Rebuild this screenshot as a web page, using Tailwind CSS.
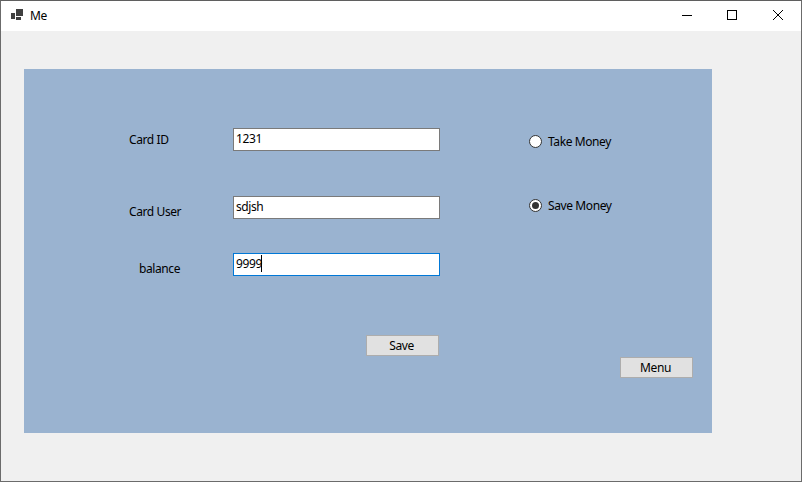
<!DOCTYPE html>
<html>
<head>
<meta charset="utf-8">
<script src="https://cdn.jsdelivr.net/npm/@tailwindcss/browser@4"></script>
</head>
<body class="m-0 overflow-hidden bg-[#f0f0f0]">
<div class="w-[802px] h-[482px] flex flex-col border border-[#6b6b6b] border-t-[#5f5f5f] text-[12px] leading-[16px] tracking-[-0.4px] text-[#000] font-['Noto_Sans','Open_Sans',sans-serif]">
  <header class="h-[30px] shrink-0 bg-white flex items-center">
    <svg class="ml-[9px] w-[16px] h-[16px]" viewBox="0 0 16 16"><path fill="#404040" d="M1 5h4v6H1zM6 1h7v7H6zM6 9h5v3H6z"/></svg>
    <span class="ml-[4px] text-[12px]">Me</span>
    <div class="ml-auto flex items-center h-full">
      <svg class="w-[46px] h-[30px]" viewBox="0 0 46 30"><path stroke="#000" stroke-width="1" d="M19 14.5h10"/></svg>
      <svg class="w-[46px] h-[30px]" viewBox="0 0 46 30"><rect x="18.5" y="9.5" width="9" height="9" fill="none" stroke="#000"/></svg>
      <svg class="w-[46px] h-[30px]" viewBox="0 0 46 30"><path stroke="#000" stroke-width="1" fill="none" d="M18 9l10 10M28 9l-10 10"/></svg>
    </div>
  </header>
  <div class="flex-1 pt-[38px] pl-[23px]">
    <main class="w-[688px] h-[364px] bg-[#9ab3d0] flex pt-[59px] pl-[105px]">
      <div class="w-[400px] flex flex-col">
        <div class="flex h-[23px]">
          <label class="w-[104px] mt-[4px]">Card ID</label>
          <div class="w-[207px] h-[23px] bg-white border border-[#7a7a7a] px-[2px] leading-[19px]">1231</div>
        </div>
        <div class="flex h-[23px] mt-[45px]">
          <label class="w-[104px] mt-[8px]">Card User</label>
          <div class="w-[207px] h-[23px] bg-white border border-[#7a7a7a] px-[2px] leading-[19px]">sdjsh</div>
        </div>
        <div class="flex h-[23px] mt-[34px]">
          <label class="w-[104px] mt-[8px] pl-[10px]">balance</label>
          <div class="w-[207px] h-[23px] bg-white border border-[#0078d7] px-[2px] leading-[19px] flex items-start"><span>9999</span><span class="w-px h-[17px] bg-black mt-px -ml-px"></span></div>
        </div>
        <div class="flex justify-end pr-[90px] mt-[59px]">
          <button class="w-[73px] h-[21px] pr-[2px] bg-[#e1e1e1] border border-[#adadad] leading-[17px] text-[12px]">Save</button>
        </div>
      </div>
      <div class="flex flex-col w-[164px]">
        <div class="flex items-center h-[16px] mt-[5px]">
          <span class="w-[13px] h-[13px] rounded-full bg-white border border-[#333]"></span>
          <span class="ml-[6px] mt-[2px]">Take Money</span>
        </div>
        <div class="flex items-center h-[16px] mt-[48px]">
          <span class="w-[13px] h-[13px] rounded-full bg-white border border-[#333] flex items-center justify-center"><span class="w-[7px] h-[7px] rounded-full bg-[#333]"></span></span>
          <span class="ml-[6px] mt-[2px]">Save Money</span>
        </div>
        <button class="w-[73px] h-[21px] pr-[2px] ml-[91px] mt-[144px] bg-[#e1e1e1] border border-[#adadad] leading-[17px] text-[12px]">Menu</button>
      </div>
    </main>
  </div>
</div>
</body>
</html>
